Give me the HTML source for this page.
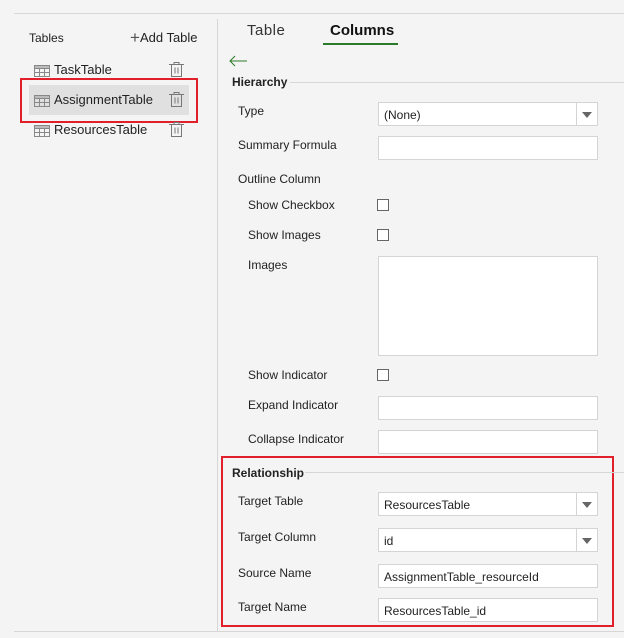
<!DOCTYPE html>
<html><head><meta charset="utf-8"><style>
body{margin:0;width:624px;height:638px;background:#f4f4f4;font-family:"Liberation Sans",sans-serif;font-size:12px;color:#222;position:relative;overflow:hidden}
.a{position:absolute;white-space:nowrap}
.l{position:absolute;white-space:nowrap;line-height:14px}
.in{position:absolute;left:378px;background:#fff;border:1px solid #d4d4d4;box-sizing:border-box;width:220px}
.in span{position:absolute;left:5px;top:4px;font-size:12px}
.dd{position:absolute;right:0;top:0;bottom:0;width:20px;border-left:1px solid #d4d4d4}
.dd:after{content:"";position:absolute;left:5px;top:9px;border-left:5px solid transparent;border-right:5px solid transparent;border-top:6px solid #666}
.cb{position:absolute;left:377px;width:10px;height:10px;border:1px solid #666;background:#fff}
</style></head><body>
<div class="a" style="left:14px;top:13px;width:610px;height:1px;background:#d6d6d6"></div>
<div class="a" style="left:217px;top:19px;width:1px;height:612px;background:#d6d6d6"></div>
<div class="a" style="left:14px;top:631px;width:610px;height:1px;background:#d6d6d6"></div>

<div class="l" style="left:29px;top:31px">Tables</div>
<div class="l" style="left:130px;top:30px;font-size:13px"><span style="font-size:17px;font-weight:100;color:#555;position:relative;top:1px">+</span>Add Table</div>

<div class="a" style="left:29px;top:85px;width:160px;height:30px;background:#e0e0e0"></div>
<div class="a" style="left:20px;top:78px;width:174px;height:41px;border:2px solid #e0202a"></div>

<svg class="a" style="left:33px;top:64px" width="18" height="80" viewBox="0 0 18 80">
<path d="M1 1h16v3H1zM1 31h16v3H1zM1 61h16v3H1z" fill="#bbb"/>
<g fill="none" stroke="#888" stroke-width="1">
<rect x="1.5" y="1.5" width="15" height="11"/><rect x="1.5" y="31.5" width="15" height="11"/><rect x="1.5" y="61.5" width="15" height="11"/>
<path d="M1.5 4.5h15M1.5 8.5h15M6.5 4.5v8M11.5 4.5v8M1.5 34.5h15M1.5 38.5h15M6.5 34.5v8M11.5 34.5v8M1.5 64.5h15M1.5 68.5h15M6.5 64.5v8M11.5 64.5v8"/>
</g></svg>
<div class="l" style="left:54px;top:63px;font-size:13px">TaskTable</div>
<div class="l" style="left:54px;top:93px;font-size:13px">AssignmentTable</div>
<div class="l" style="left:54px;top:123px;font-size:13px">ResourcesTable</div>
<svg class="a" style="left:168px;top:61px" width="17" height="80" viewBox="0 0 17 80"><g fill="none" stroke="#777" stroke-width="1">
<path d="M1 3.5h15M6 3.5v-2h5v2M3.5 3.5v12h10v-12M7 6.5v6M10 6.5v6"/>
<g transform="translate(0,30)"><path d="M1 3.5h15M6 3.5v-2h5v2M3.5 3.5v12h10v-12M7 6.5v6M10 6.5v6"/></g>
<g transform="translate(0,60)"><path d="M1 3.5h15M6 3.5v-2h5v2M3.5 3.5v12h10v-12M7 6.5v6M10 6.5v6"/></g></g></svg>

<div class="l" style="left:247px;top:24px;font-size:15px;color:#333;letter-spacing:0.5px">Table</div>
<div class="l" style="left:330px;top:24px;font-size:15px;font-weight:bold;color:#111">Columns</div>
<div class="a" style="left:323px;top:43px;width:75px;height:2px;background:#2b7a2b"></div>
<svg class="a" style="left:229px;top:55px" width="20" height="12"><path d="M1 6h17M6 1L1 6l5 5" fill="none" stroke="#2b7a2b" stroke-width="1"/></svg>

<div class="l" style="left:232px;top:75px;font-weight:bold">Hierarchy</div>
<div class="a" style="left:290px;top:82px;width:334px;height:1px;background:#d6d6d6"></div>
<div class="l" style="left:238px;top:104px">Type</div>
<div class="in" style="top:102px;height:24px"><span style="top:5px">(None)</span><div class="dd"></div></div>
<div class="l" style="left:238px;top:138px">Summary Formula</div>
<div class="in" style="top:136px;height:24px"></div>
<div class="l" style="left:238px;top:172px">Outline Column</div>
<div class="l" style="left:248px;top:198px">Show Checkbox</div>
<div class="cb" style="top:199px"></div>
<div class="l" style="left:248px;top:228px">Show Images</div>
<div class="cb" style="top:229px"></div>
<div class="l" style="left:248px;top:258px">Images</div>
<div class="in" style="top:256px;height:100px"></div>
<div class="l" style="left:248px;top:368px">Show Indicator</div>
<div class="cb" style="top:369px"></div>
<div class="l" style="left:248px;top:398px">Expand Indicator</div>
<div class="in" style="top:396px;height:24px"></div>
<div class="l" style="left:248px;top:432px">Collapse Indicator</div>
<div class="in" style="top:430px;height:24px"></div>

<div class="a" style="left:221px;top:456px;width:389px;height:167px;border:2px solid #e0202a"></div>
<div class="l" style="left:232px;top:466px;font-weight:bold">Relationship</div>
<div class="a" style="left:305px;top:472px;width:319px;height:1px;background:#d6d6d6"></div>
<div class="l" style="left:238px;top:494px">Target Table</div>
<div class="in" style="top:492px;height:24px"><span style="top:5px">ResourcesTable</span><div class="dd"></div></div>
<div class="l" style="left:238px;top:530px">Target Column</div>
<div class="in" style="top:528px;height:24px"><span style="top:5px">id</span><div class="dd"></div></div>
<div class="l" style="left:238px;top:566px">Source Name</div>
<div class="in" style="top:564px;height:24px"><span style="top:5px">AssignmentTable_resourceId</span></div>
<div class="l" style="left:238px;top:600px">Target Name</div>
<div class="in" style="top:598px;height:24px"><span style="top:5px">ResourcesTable_id</span></div>
</body></html>
